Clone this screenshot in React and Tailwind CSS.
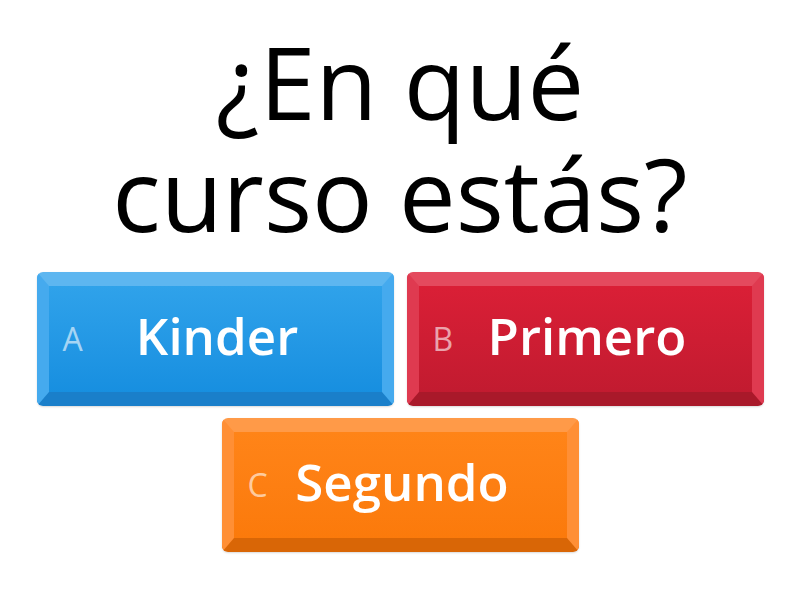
const answers = [
  {
    key: 'A',
    text: 'Kinder',
    edge: 'border-t-[#5db6f0] border-x-[#45aaee] border-b-[#1a7fca]',
    face: 'bg-gradient-to-b from-[#2fa2ea] to-[#178fe0]',
  },
  {
    key: 'B',
    text: 'Primero',
    edge: 'border-t-[#e44a5e] border-x-[#df3a50] border-b-[#a9192a]',
    face: 'bg-gradient-to-b from-[#da1f36] to-[#c21b30]',
  },
  {
    key: 'C',
    text: 'Segundo',
    edge: 'border-t-[#ff9a48] border-x-[#ff8f35] border-b-[#d96606]',
    face: 'bg-gradient-to-b from-[#ff8418] to-[#fb7a0b]',
  },
];

function Answer({ item }) {
  return (
    <div
      className={`w-[357px] h-[134px] rounded-md border-t-[14px] border-x-[12px] border-b-[14px] shadow-[0_1px_2px_rgba(0,0,0,0.15)] ${item.edge}`}>
      <div className={`relative h-full flex items-center justify-center ${item.face}`}>
        <span className="absolute left-[14px] top-1/2 -translate-y-1/2 text-[32px] font-normal text-white/60">
          {item.key}
        </span>
        <span className="pl-[4px] text-[51px] font-semibold text-white leading-none pb-[8px]">
          {item.text}
        </span>
      </div>
    </div>
  );
}

export default function App() {
  return (
    <div
      className="w-[800px] h-[600px] bg-white overflow-hidden flex flex-col items-center"
      style={{ fontFamily: '"Open Sans", "Liberation Sans", sans-serif' }}>
      <h1 className="pt-[25px] text-[101px] leading-[112px] font-normal text-black text-center">
        ¿En qué
        <br />
        curso estás?
      </h1>
      <div className="mt-[23px] w-[728px] flex flex-wrap justify-center gap-x-[13px] gap-y-[12px]">
        {answers.map((a) => (
          <Answer key={a.key} item={a} />
        ))}
      </div>
    </div>
  );
}
